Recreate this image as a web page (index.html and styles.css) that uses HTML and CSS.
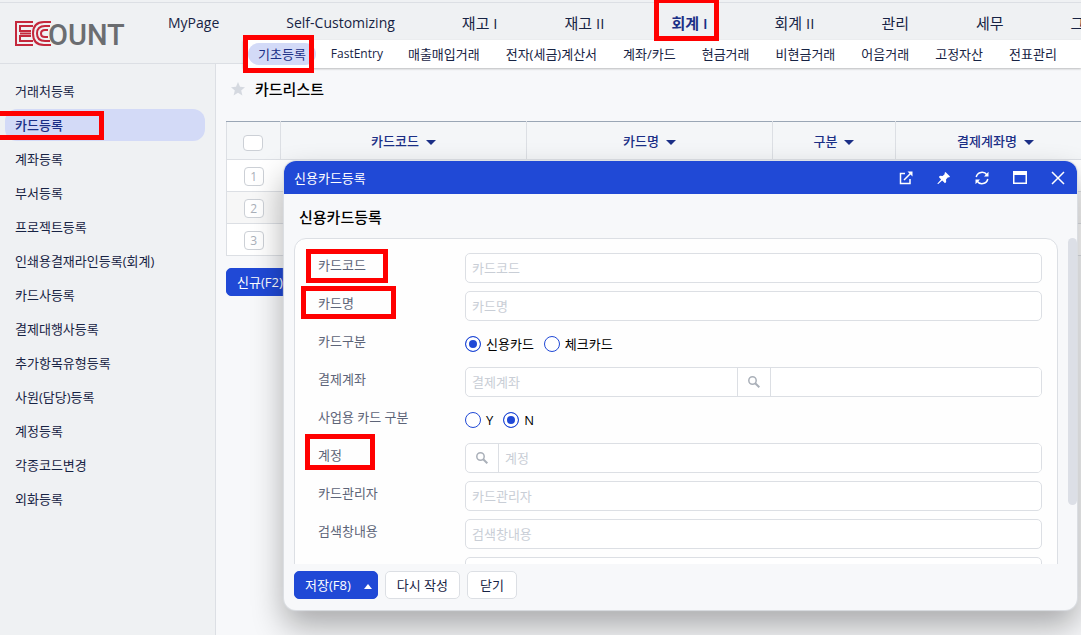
FILE: index.html
```html
<!DOCTYPE html>
<html lang="ko">
<head>
    <meta charset="UTF-8">
    <meta name="viewport" content="width=device-width, initial-scale=1.0">
    <title>카드리스트</title>
    <link rel="stylesheet" href="styles.css">
</head>
<body>

    <header class="header">
        <a href="#" class="logo" aria-label="ECOUNT">
            <svg width="112" height="28" viewBox="0 0 112 28">
                <g fill="none" stroke="#c4283c" stroke-width="2">
                    <path d="M18 2H1V25H18"/>
                    <path d="M18 6H5V11H16M18 21H5V16H16"/>
                    <path d="M5 13.500H16"/>
                    <path d="M36 2H29C21 2 18 7 18 13.500S21 25 29 25H36"/>
                    <path d="M35 6H30C24 6 22 9 22 13.500S24 21 30 21H35"/>
                    <path d="M33 10H30C27 10 26 11 26 13.500S27 17 30 17H33"/>
                </g>
                <text x="33" y="25" class="logo-text">OUNT</text>
            </svg>
        </a>
        <div class="menus">
            <nav class="main-menu">
                <a href="#" class="latin">MyPage</a>
                <a href="#" class="latin">Self-Customizing</a>
                <a href="#">재고 I</a>
                <a href="#">재고 II</a>
                <a href="#" class="active">회계 I</a>
                <a href="#">회계 II</a>
                <a href="#">관리</a>
                <a href="#">세무</a>
                <a href="#">그</a>
            </nav>
            <nav class="sub-menu">
                <a href="#" class="active">기초등록</a>
                <a href="#" class="latin">FastEntry</a>
                <a href="#">매출매입거래</a>
                <a href="#">전자(세금)계산서</a>
                <a href="#">계좌/카드</a>
                <a href="#">현금거래</a>
                <a href="#">비현금거래</a>
                <a href="#">어음거래</a>
                <a href="#">고정자산</a>
                <a href="#">전표관리</a>
            </nav>
        </div>
    </header>

    <div class="page">
        <aside class="sidebar">
            <a href="#">거래처등록</a>
            <a href="#" class="active">카드등록</a>
            <a href="#">계좌등록</a>
            <a href="#">부서등록</a>
            <a href="#">프로젝트등록</a>
            <a href="#">인쇄용결재라인등록(회계)</a>
            <a href="#">카드사등록</a>
            <a href="#">결제대행사등록</a>
            <a href="#">추가항목유형등록</a>
            <a href="#">사원(담당)등록</a>
            <a href="#">계정등록</a>
            <a href="#">각종코드변경</a>
            <a href="#">외화등록</a>
        </aside>

        <main class="content">
            <div class="title-row">
                <svg width="14" height="14" viewBox="0 0 14 14"><path fill="#d5d9e0" d="M7 0l2 4.800 5 .4-3.800 3.300 1.200 5L7 10.800 2.600 13.500l1.200-5L0 5.200l5-.4z"/></svg>
                <h1>카드리스트</h1>
            </div>
            <table class="list">
                <colgroup>
                    <col class="col-check"><col class="col-code"><col class="col-code"><col class="col-type"><col>
                </colgroup>
                <thead>
                    <tr>
                        <th><input type="checkbox" class="check" aria-label="전체 선택"></th>
                        <th>카드코드<span class="arrow"></span></th>
                        <th>카드명<span class="arrow"></span></th>
                        <th>구분<span class="arrow"></span></th>
                        <th>결제계좌명<span class="arrow"></span></th>
                    </tr>
                </thead>
                <tbody>
                    <tr><td><button class="num">1</button></td><td></td><td></td><td></td><td></td></tr>
                    <tr><td><button class="num">2</button></td><td></td><td></td><td></td><td></td></tr>
                    <tr><td><button class="num">3</button></td><td></td><td></td><td></td><td></td></tr>
                </tbody>
            </table>
            <button class="btn primary">신규(F2)</button>
        </main>
    </div>

    <!-- card register window -->
    <section class="modal" role="dialog" aria-labelledby="modal-title">
        <div class="modal-bar">
            <span id="modal-title">신용카드등록</span>
            <div class="modal-tools">
                <button aria-label="새 창">
                    <svg width="14" height="14" viewBox="0 0 14 14" fill="none" stroke="#fff" stroke-width="1.500"><path d="M6 2.500H1.500v10h9.500V8M5 9l7.500-7.500"/><path d="M8.500.5h5v5z" fill="#fff" stroke="none"/></svg>
                </button>
                <button aria-label="고정">
                    <svg width="14" height="14" viewBox="0 0 14 14"><path fill="#fff" d="M8.500 1L13 5.500l-1 1-1-.2-2 2.200.2 2.500-1.200 1.200-2.800-2.700L1 13.200l-.6-.6 3.700-4.100L1.800 6 3 4.800l2.600.2 2.200-2L7.500 2z"/></svg>
                </button>
                <button aria-label="새로고침">
                    <svg width="14" height="14" viewBox="0 0 14 14" fill="none" stroke="#fff" stroke-width="1.500"><path d="M1.200 6A6 6 0 0 1 12 4M12.800 8A6 6 0 0 1 2 10"/><path d="M13.500.8v4.700H9zM.5 13.200V8.500H5z" fill="#fff" stroke="none"/></svg>
                </button>
                <button aria-label="최대화">
                    <svg width="14" height="14" viewBox="0 0 14 14"><path fill="#fff" fill-rule="evenodd" d="M0 0h14v13H0zM1.500 4v7.500h11V4z"/></svg>
                </button>
                <button aria-label="닫기">
                    <svg width="14" height="14" viewBox="0 0 14 14" fill="none" stroke="#fff" stroke-width="1.500"><path d="M1 1l12 12M13 1L1 13"/></svg>
                </button>
            </div>
        </div>
        <h2>신용카드등록</h2>
        <div class="modal-body">
            <form class="form">
                <label for="card-code">카드코드</label>
                <input type="text" id="card-code" placeholder="카드코드">

                <label for="card-name">카드명</label>
                <input type="text" id="card-name" placeholder="카드명">

                <span class="label">카드구분</span>
                <div class="radios">
                    <label><input type="radio" name="type" checked>신용카드</label>
                    <label><input type="radio" name="type">체크카드</label>
                </div>

                <label for="pay-account">결제계좌</label>
                <div class="group">
                    <input type="text" id="pay-account" placeholder="결제계좌">
                    <button type="button" aria-label="검색"><svg width="12" height="12" viewBox="0 0 12 12" fill="none" stroke="#aab0b9"><circle cx="4.500" cy="4.500" r="3.700" stroke-width="1.500"/><path d="M7.200 7.200L11.300 11.300" stroke-width="2"/></svg></button>
                    <input type="text" aria-label="결제계좌명">
                </div>

                <span class="label">사업용 카드 구분</span>
                <div class="radios">
                    <label><input type="radio" name="biz">Y</label>
                    <label><input type="radio" name="biz" checked>N</label>
                </div>

                <label for="account">계정</label>
                <div class="group">
                    <button type="button" aria-label="검색"><svg width="12" height="12" viewBox="0 0 12 12" fill="none" stroke="#aab0b9"><circle cx="4.500" cy="4.500" r="3.700" stroke-width="1.500"/><path d="M7.200 7.200L11.300 11.300" stroke-width="2"/></svg></button>
                    <input type="text" id="account" placeholder="계정">
                </div>

                <label for="manager">카드관리자</label>
                <input type="text" id="manager" placeholder="카드관리자">

                <label for="search-text">검색창내용</label>
                <input type="text" id="search-text" placeholder="검색창내용">

                <span class="label"></span>
                <input type="text" aria-label="적요">
            </form>
            <div class="scrollbar"></div>
        </div>
        <div class="modal-footer">
            <button class="btn primary has-arrow">저장(F8)<span class="arrow up"></span></button>
            <button class="btn">다시 작성</button>
            <button class="btn">닫기</button>
        </div>
    </section>

    <!-- red guide boxes -->
    <div class="mark mark-menu"></div>
    <div class="mark mark-submenu"></div>
    <div class="mark mark-sidebar"></div>
    <div class="mark mark-code"></div>
    <div class="mark mark-name"></div>
    <div class="mark mark-account"></div>

</body>
</html>
```

FILE: styles.css
```css
* {
    box-sizing: border-box;
}
body {
    margin: 0;
    height: 100vh;
    position: relative;
    display: flex;
    flex-direction: column;
    overflow: hidden;
    background-color: #f7f8fa;
    color: #172344;
    font-family: "Open Sans", "Noto Sans CJK KR", sans-serif;
    font-size: 13px;
    line-height: 20px;
}
a {
    color: inherit;
    text-decoration: none;
    white-space: nowrap;
}
button, input {
    font: inherit;
    color: inherit;
}
button {
    cursor: pointer;
}
h1, h2 {
    margin: 0;
    color: #000;
    font-size: 15px;
    font-weight: 500;
}

/* header */
.header {
    display: flex;
    flex: none;
    height: 64px;
    background: linear-gradient(#dcdfe4, #dcdfe4) 0 2px / 100% 1px no-repeat #eff1f3;
    border-bottom: 1px solid #dcdfe4;
}
.logo {
    flex: none;
    width: 168px;
    padding: 20px 0 0 15px;
}
.logo-text {
    fill: #6b6d70;
    font-family: Roboto, sans-serif;
    font-size: 29px;
    font-weight: 500;
}
.menus {
    flex: 1;
    min-width: 0;
}
.main-menu {
    display: flex;
    gap: 67px;
    height: 40px;
    padding-top: 6px;
    align-items: center;
    font-size: 15px;
    overflow: hidden;
}
.main-menu .latin {
    font-size: 14px;
}
.main-menu .active {
    color: #1b2f86;
    font-weight: 600;
}
.sub-menu {
    display: flex;
    gap: 6px;
    height: 28px;
    margin-left: 75px;
    padding-left: 5px;
    align-items: center;
    background-color: #fff;
    box-shadow: 0 1px 2px rgba(0, 0, 0, 0.25);
    position: relative;
}
.sub-menu a {
    padding: 1px 10px;
    border-radius: 11px;
}
.sub-menu .latin {
    padding: 1px 9px;
    font-size: 12px;
}
.sub-menu .active {
    color: #1b2f86;
    background-color: #d3daf7;
}

/* left menu */
.page {
    display: flex;
    flex: 1;
    min-height: 0;
}
.sidebar {
    display: flex;
    flex-direction: column;
    flex: none;
    gap: 2px;
    width: 216px;
    padding: 11px 10px 0 5px;
    background-color: #eff1f3;
    border-right: 1px solid #dcdfe4;
}
.sidebar a {
    padding: 6px 10px;
    border-radius: 12px;
}
.sidebar .active {
    color: #1b2f86;
    font-weight: 500;
    background-color: #d3daf7;
}

/* card list */
.content {
    flex: 1;
    min-width: 0;
    padding: 15px 0 0 10px;
    overflow: hidden;
}
.title-row {
    display: flex;
    align-items: center;
    gap: 10px;
    padding-left: 5px;
    margin-bottom: 22px;
}
.list {
    width: 870px;
    margin-bottom: 12px;
    border-collapse: collapse;
    table-layout: fixed;
    background-color: #fff;
}
.col-check {
    width: 54px;
}
.col-code {
    width: 246px;
}
.col-type {
    width: 123px;
}
.list th, .list td {
    height: 32px;
    padding: 0;
    border-bottom: 1px solid #dcdfe4;
    text-align: center;
}
.list th {
    height: 38px;
    border: 1px solid #dcdfe4;
    border-top-color: #9aa6b5;
    background-color: #f4f6f8;
    color: #1b2f86;
    font-weight: 500;
}
.list td:first-child {
    border-left: 1px solid #dcdfe4;
}
.list tr:nth-child(2) td {
    background-color: #f7f7f7;
}
.check {
    appearance: none;
    width: 20px;
    height: 16px;
    margin: 4px 1px 0 0;
    vertical-align: middle;
    background-color: #fff;
    border: 1px solid #ccd0d6;
    border-radius: 4px;
}
.num {
    width: 20px;
    height: 19px;
    padding: 0;
    line-height: 17px;
    font-size: 12px;
    color: #aab0b9;
    background-color: #fff;
    border: 1px solid #ccd0d6;
    border-radius: 4px;
}
.arrow {
    display: inline-block;
    margin-left: 7px;
    vertical-align: middle;
    border: 5px solid transparent;
    border-top-color: #1b2f86;
    border-bottom: 0;
}
.arrow.up {
    margin-left: 13px;
    border: 4px solid transparent;
    border-top: 0;
    border-bottom: 5px solid #fff;
}
.btn {
    height: 28px;
    min-width: 50px;
    padding: 0 11px;
    line-height: 20px;
    background-color: #fff;
    border: 1px solid #dcdfe4;
    border-radius: 5px;
    white-space: nowrap;
}
.btn.primary {
    padding: 0 10px;
    color: #fff;
    background-color: #2049d6;
    border-color: #2049d6;
}
.btn.has-arrow {
    padding-right: 5px;
}

/* modal */
.modal {
    position: absolute;
    top: 161px;
    right: 4px;
    bottom: 25px;
    left: 284px;
    display: flex;
    flex-direction: column;
    overflow: hidden;
    background-color: #f7f8fa;
    border-radius: 12px;
    box-shadow: 0 0 1px 1px #dcdfe4, 0 16px 32px rgba(0, 0, 0, 0.32);
}
.modal-bar {
    display: flex;
    justify-content: space-between;
    align-items: center;
    height: 33px;
    padding: 0 12px 0 10px;
    color: #fff;
    background-color: #2049d6;
}
.modal-tools {
    display: flex;
    gap: 24px;
}
.modal-tools button {
    display: flex;
    padding: 0;
    background: none;
    border: 0;
}
.modal h2 {
    padding: 13px 15px 11px;
}
.modal-body {
    display: flex;
    flex: 1;
    min-height: 0;
    gap: 10px;
    padding-left: 10px;
    overflow: hidden;
}
.form {
    display: grid;
    grid-template-columns: 147px minmax(0, 1fr);
    grid-auto-rows: 30px;
    gap: 8px 0;
    flex: 1;
    height: 420px;
    padding: 14px 15px 14px 23px;
    background-color: #fefefe;
    border: 1px solid #dcdfe4;
    border-radius: 12px;
}
.form > label, .label {
    padding-top: 2px;
    color: #5d6478;
}
.form input[type="text"] {
    width: 100%;
    min-width: 0;
    height: 30px;
    padding: 0 6px;
    background-color: #fff;
    border: 1px solid #dcdfe4;
    border-radius: 5px;
}
.form input::placeholder {
    color: #c9ced6;
}
.group {
    display: flex;
    border: 1px solid #dcdfe4;
    border-radius: 5px;
    background-color: #fff;
}
.group button {
    display: flex;
    flex: none;
    align-items: center;
    justify-content: center;
    width: 32px;
    padding: 0;
    background: none;
    border: 0;
}
.form .group input {
    flex: 1;
    height: 28px;
    border-width: 0;
}
.form .group button + input {
    border-left-width: 1px;
    border-radius: 0 4px 4px 0;
}
.group input + button {
    width: 33px;
    border-left: 1px solid #dcdfe4;
}
.radios {
    display: flex;
    align-items: center;
    gap: 10px;
    color: #000;
}
.radios label {
    display: flex;
    align-items: center;
    gap: 5px;
}
.radios input {
    appearance: none;
    width: 16px;
    height: 16px;
    margin: 0;
    background-color: #fff;
    border: 1px solid #2049d6;
    border-radius: 50%;
}
.radios input:checked {
    background-color: #2049d6;
    box-shadow: inset 0 0 0 3px #fff;
}
.scrollbar {
    flex: none;
    width: 9px;
    height: 82%;
    border-radius: 5px;
    background-color: #dcdfe6;
}
.modal-footer {
    display: flex;
    gap: 7px;
    padding: 7px 10px 11px;
}

/* guide boxes */
.mark {
    position: absolute;
    border: 5px solid #f00;
    pointer-events: none;
}
.mark-menu {
    top: -2px;
    left: 654px;
    width: 65px;
    height: 43px;
}
.mark-submenu {
    top: 35px;
    left: 243px;
    width: 71px;
    height: 38px;
}
.mark-sidebar {
    top: 111px;
    left: -5px;
    width: 109px;
    height: 29px;
}
.mark-code {
    top: 249px;
    left: 306px;
    width: 82px;
    height: 34px;
}
.mark-name {
    top: 286px;
    left: 301px;
    width: 95px;
    height: 33px;
}
.mark-account {
    top: 434px;
    left: 305px;
    width: 70px;
    height: 36px;
}
```
